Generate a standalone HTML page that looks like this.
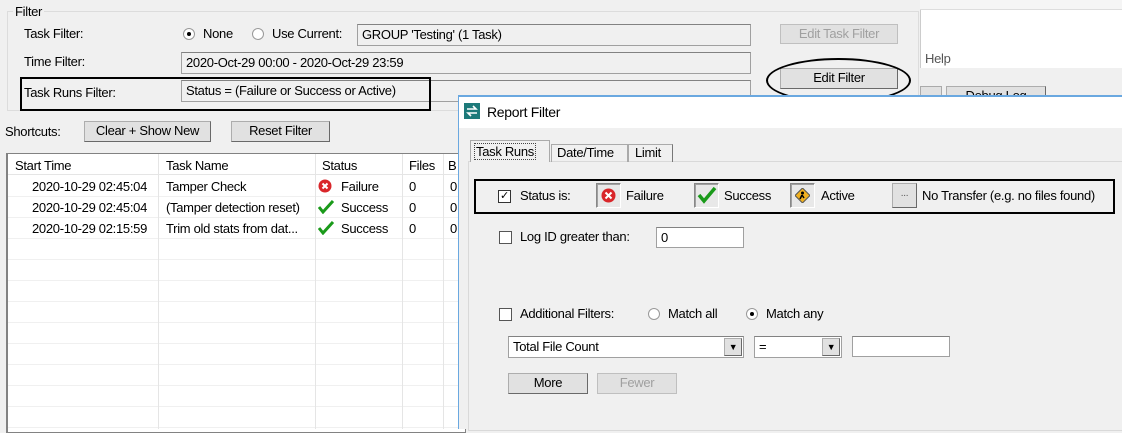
<!DOCTYPE html>
<html><head><meta charset="utf-8"><style>
*{box-sizing:border-box;margin:0;padding:0}
body{width:1122px;height:429px;background:#f0f0f0;position:relative;overflow:hidden;font-family:"Liberation Sans",sans-serif;font-size:13px;color:#000;letter-spacing:-0.3px}
.a{position:absolute;white-space:nowrap}
.fld{position:absolute;background:#f0f0f0;border:1px solid #a0a0a0;border-top-color:#828282;padding:2px 4px;line-height:16px}
.wf{background:#fff}
.btn{position:absolute;background:#e1e1e1;border:1px solid #adadad;border-right-color:#696969;border-bottom-color:#696969;text-align:center;line-height:18px}
.dis{color:#a0a0a0;border-color:#bfbfbf}
.cb{position:absolute;width:13px;height:13px;border:1px solid #333;background:#fff;font-size:11px;line-height:11px;text-align:center}
.rd{position:absolute;width:12px;height:12px;border-radius:50%;border:1px solid #999;background:#fff}
.rd.on::after{content:"";position:absolute;left:3px;top:3px;width:4px;height:4px;border-radius:50%;background:#000}
.ibtn{position:absolute;width:25px;height:25px;background:#e8e8e8;border:1px solid #888;border-right-color:#fff;border-bottom-color:#fff;box-shadow:inset 1px 1px 0 #a0a0a0}
.hl{position:absolute;left:8px;width:450px;height:1px;background:#f0f0f0}
.vl{position:absolute;top:154px;width:1px;height:275px;background:#f0f0f0}
</style></head><body>
<!-- right top panel -->
<div class="a" style="left:920px;top:0;width:202px;height:10px;background:#f5f5f5;border-bottom:1px solid #ddd"></div>
<div class="a" style="left:920px;top:10px;width:202px;height:58px;background:#fff;border-left:1px solid #ccc"></div>
<div class="a" style="left:925px;top:51px;color:#555">Help</div>
<div class="btn" style="left:946px;top:86px;width:100px;height:20px;">Debug Log</div>
<div class="a" style="left:920px;top:86px;width:22px;height:12px;border:1px solid #aaa;background:#e1e1e1"></div>
<!-- filter group -->
<div class="a" style="left:7px;top:11px;width:912px;height:100px;border:1px solid #dcdcdc"></div>
<div class="a" style="left:13px;top:4px;background:#f0f0f0;padding:0 2px">Filter</div>
<div class="a" style="left:24px;top:26px">Task Filter:</div>
<div class="a" style="left:24px;top:54px">Time Filter:</div>
<div class="a" style="left:24px;top:85px">Task Runs Filter:</div>
<div class="rd on" style="left:183px;top:28px"></div><div class="a" style="left:203px;top:26px">None</div>
<div class="rd" style="left:252px;top:28px"></div><div class="a" style="left:272px;top:26px">Use Current:</div>
<div class="fld" style="left:357px;top:24px;width:394px;height:22px">GROUP 'Testing' (1 Task)</div>
<div class="fld" style="left:181px;top:52px;width:570px;height:22px">2020-Oct-29 00:00 - 2020-Oct-29 23:59</div>
<div class="fld" style="left:181px;top:80px;width:570px;height:22px">Status = (Failure or Success or Active)</div>
<div class="a" style="left:20px;top:77px;width:411px;height:34px;border:2px solid #000"></div>
<div class="btn dis" style="left:780px;top:24px;width:118px;height:20px">Edit Task Filter</div>
<div class="btn" style="left:780px;top:68px;width:118px;height:21px">Edit Filter</div>
<div class="a" style="left:766px;top:58px;width:145px;height:45px;border:2px solid #000;border-radius:50%"></div>
<!-- shortcuts -->
<div class="a" style="left:5px;top:124px">Shortcuts:</div>
<div class="btn" style="left:84px;top:121px;width:127px;height:21px">Clear + Show New</div>
<div class="btn" style="left:231px;top:121px;width:99px;height:21px">Reset Filter</div>
<!-- list -->
<div class="a" style="left:6px;top:153px;width:460px;height:280px;background:#fff;border:1px solid #828282;border-left:2px solid #828282"></div>
<div class="a" style="left:8px;top:154px;width:450px;height:21px;background:#fff;border-bottom:1px solid #e5e5e5"></div>
<div class="hl" style="top:196px"></div><div class="hl" style="top:217px"></div><div class="hl" style="top:238px"></div><div class="hl" style="top:259px"></div><div class="hl" style="top:280px"></div><div class="hl" style="top:301px"></div><div class="hl" style="top:322px"></div><div class="hl" style="top:343px"></div><div class="hl" style="top:364px"></div><div class="hl" style="top:385px"></div><div class="hl" style="top:406px"></div><div class="hl" style="top:427px"></div>
<div class="vl" style="left:158px;background:#e5e5e5"></div><div class="vl" style="left:315px;background:#e5e5e5"></div><div class="vl" style="left:402px;background:#e5e5e5"></div><div class="vl" style="left:443px;background:#e5e5e5"></div>
<div class="a" style="left:15px;top:158px">Start Time</div>
<div class="a" style="left:166px;top:158px">Task Name</div>
<div class="a" style="left:322px;top:158px">Status</div>
<div class="a" style="left:409px;top:158px">Files</div>
<div class="a" style="left:448px;top:158px">B</div>
<div class="a" style="left:32px;top:179px">2020-10-29 02:45:04</div><div class="a" style="left:166px;top:179px">Tamper Check</div>
<svg class="a" style="left:318px;top:179px" width="14" height="14"><circle cx="7" cy="7" r="6.5" fill="#d9262a"/><path d="M4.5 4.5l5 5M9.5 4.5l-5 5" stroke="#fff" stroke-width="2"/></svg>
<div class="a" style="left:341px;top:179px">Failure</div><div class="a" style="left:409px;top:179px">0</div><div class="a" style="left:450px;top:179px">0</div>
<div class="a" style="left:32px;top:200px">2020-10-29 02:45:04</div><div class="a" style="left:166px;top:200px">(Tamper detection reset)</div>
<svg class="a" style="left:318px;top:200px" width="16" height="14"><path d="M1 7l4 5L15 1" stroke="#1a9a1a" stroke-width="3" fill="none"/></svg>
<div class="a" style="left:341px;top:200px">Success</div><div class="a" style="left:409px;top:200px">0</div><div class="a" style="left:450px;top:200px">0</div>
<div class="a" style="left:32px;top:221px">2020-10-29 02:15:59</div><div class="a" style="left:166px;top:221px">Trim old stats from dat...</div>
<svg class="a" style="left:318px;top:221px" width="16" height="14"><path d="M1 7l4 5L15 1" stroke="#1a9a1a" stroke-width="3" fill="none"/></svg>
<div class="a" style="left:341px;top:221px">Success</div><div class="a" style="left:409px;top:221px">0</div><div class="a" style="left:450px;top:221px">0</div>
<!-- dialog -->
<div class="a" style="left:458px;top:95px;width:664px;height:334px;background:#f0f0f0;border-top:2px solid #6aa8e0;border-left:1px solid #6aa8e0"></div>
<div class="a" style="left:459px;top:97px;width:663px;height:31px;background:#fff"></div>
<svg class="a" style="left:464px;top:103px" width="16" height="16"><rect width="16" height="16" fill="#1d7a7a"/><path d="M3 6h9l-3-3M13 10H4l3 3" stroke="#fff" stroke-width="1.6" fill="none"/></svg>
<div class="a" style="left:487px;top:104px;font-size:14px">Report Filter</div>
<div class="a" style="left:468px;top:161px;width:660px;height:270px;border:1px solid #d9d9d9;border-right:none"></div>
<div class="a" style="left:470px;top:140px;width:80px;height:22px;background:#f0f0f0;border:1px solid #aaa;border-bottom:none"></div>
<div class="a" style="left:474px;top:143px;padding:0 1px;border:1px dotted #444">Task Runs</div>
<div class="a" style="left:551px;top:144px;width:77px;height:18px;border:1px solid #aaa;border-bottom:none;padding-left:5px">Date/Time</div>
<div class="a" style="left:628px;top:144px;width:45px;height:18px;border:1px solid #aaa;border-bottom:none;border-right-color:#777;padding-left:6px">Limit</div>
<div class="a" style="left:474px;top:179px;width:641px;height:35px;border:2px solid #000"></div>
<div class="cb" style="left:498px;top:190px">✓</div><div class="a" style="left:520px;top:188px">Status is:</div>
<div class="ibtn" style="left:596px;top:183px"></div>
<svg class="a" style="left:601px;top:188px" width="15" height="15"><circle cx="7.5" cy="7.5" r="7" fill="#d9262a"/><path d="M4.5 4.5l6 6M10.5 4.5l-6 6" stroke="#fff" stroke-width="2"/></svg>
<div class="a" style="left:626px;top:188px">Failure</div>
<div class="ibtn" style="left:694px;top:183px"></div>
<svg class="a" style="left:697px;top:186px" width="20" height="18"><path d="M2 9l5 6L18 2" stroke="#1a9a1a" stroke-width="3.5" fill="none"/></svg>
<div class="a" style="left:724px;top:188px">Success</div>
<div class="ibtn" style="left:790px;top:183px"></div>
<svg class="a" style="left:795px;top:188px" width="15" height="15"><path d="M7.5 0L15 7.5 7.5 15 0 7.5z" fill="#f0b020" stroke="#555"/><circle cx="7.5" cy="5" r="1.5" fill="#000"/><path d="M7 7l-2 4M7 7l2 3" stroke="#000" stroke-width="1.5"/></svg>
<div class="a" style="left:821px;top:188px">Active</div>
<div class="btn" style="left:892px;top:183px;width:25px;height:25px;line-height:20px;font-size:10px;color:#555">...</div>
<div class="a" style="left:922px;top:188px">No Transfer (e.g. no files found)</div>
<div class="cb" style="left:499px;top:231px;border-color:#555"></div><div class="a" style="left:520px;top:229px">Log ID greater than:</div>
<div class="fld wf" style="left:656px;top:227px;width:88px;height:21px">0</div>
<div class="cb" style="left:499px;top:308px;border-color:#555"></div><div class="a" style="left:520px;top:306px">Additional Filters:</div>
<div class="rd" style="left:648px;top:308px"></div><div class="a" style="left:668px;top:306px">Match all</div>
<div class="rd on" style="left:746px;top:308px"></div><div class="a" style="left:766px;top:306px">Match any</div>
<div class="fld wf" style="left:508px;top:336px;width:236px;height:22px">Total File Count</div>
<div class="btn" style="left:724px;top:338px;width:18px;height:18px;font-size:9px;line-height:16px">▼</div>
<div class="fld wf" style="left:754px;top:336px;width:88px;height:22px">=</div>
<div class="btn" style="left:822px;top:338px;width:18px;height:18px;font-size:9px;line-height:16px">▼</div>
<div class="fld wf" style="left:852px;top:336px;width:98px;height:21px"></div>
<div class="btn" style="left:508px;top:373px;width:80px;height:21px">More</div>
<div class="btn dis" style="left:597px;top:373px;width:80px;height:21px">Fewer</div>
</body></html>
